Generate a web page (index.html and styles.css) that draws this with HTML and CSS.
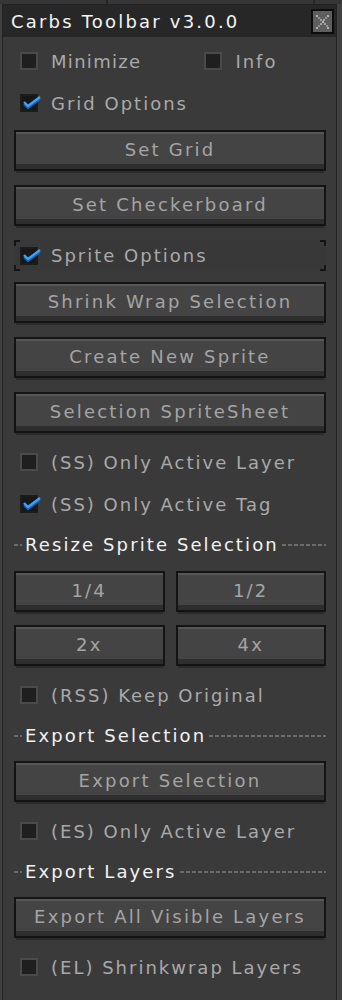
FILE: index.html
```html
<!DOCTYPE html>
<html>
<head>
	<title>Carbs Toolbar</title>
	<link rel="stylesheet" href="styles.css">
</head>
<body>
	<div class="topstrip">
		<div class="seg seg-a"></div>
		<div class="seg seg-b"></div>
		<div class="seg seg-c"></div>
	</div>
	<div class="window">
		<div class="titlebar">
			<span class="title">Carbs Toolbar v3.0.0</span>
			<button type="button" class="close">
				<svg width="17" height="19" viewBox="0 0 17 19">
					<rect x="2" y="3" width="2" height="2" fill="#b0b0b0"/>
					<rect x="4" y="5" width="2" height="2" fill="#8e8e8e"/>
					<rect x="6" y="7" width="2" height="2" fill="#a0a0a0"/>
					<rect x="8" y="9" width="2" height="2" fill="#b8b8b8"/>
					<rect x="10" y="11" width="2" height="2" fill="#a0a0a0"/>
					<rect x="12" y="13" width="2" height="2" fill="#8e8e8e"/>
					<rect x="13" y="15" width="2" height="2" fill="#b0b0b0"/>
					<rect x="13" y="3" width="2" height="2" fill="#b0b0b0"/>
					<rect x="11" y="5" width="2" height="2" fill="#8e8e8e"/>
					<rect x="9" y="7" width="2" height="2" fill="#a0a0a0"/>
					<rect x="6" y="11" width="2" height="2" fill="#a0a0a0"/>
					<rect x="4" y="13" width="2" height="2" fill="#8e8e8e"/>
					<rect x="2" y="15" width="2" height="2" fill="#b0b0b0"/>
				</svg>
			</button>
		</div>
		<div class="content">
			<div class="row row-first">
				<label class="check check-min"><span class="box"></span>Minimize</label>
				<label class="check check-info"><span class="box"></span>Info</label>
			</div>
			<div class="row">
				<label class="check"><span class="box checked"><svg width="22" height="18" viewBox="0 0 22 18"><polyline points="3,10 7,14 19,5" fill="none" stroke="#1f5f9e" stroke-width="2.4"/><polyline points="3,8 7,12 19,3" fill="none" stroke="#3aa2ff" stroke-width="2.4"/></svg></span>Grid Options</label>
			</div>
			<button type="button" class="btn btn-first">Set Grid</button>
			<button type="button" class="btn">Set Checkerboard</button>
			<div class="row focused">
				<label class="check"><span class="box checked"><svg width="22" height="18" viewBox="0 0 22 18"><polyline points="3,10 7,14 19,5" fill="none" stroke="#1f5f9e" stroke-width="2.4"/><polyline points="3,8 7,12 19,3" fill="none" stroke="#3aa2ff" stroke-width="2.4"/></svg></span>Sprite Options</label>
			</div>
			<button type="button" class="btn btn-after-focus">Shrink Wrap Selection</button>
			<button type="button" class="btn">Create New Sprite</button>
			<button type="button" class="btn">Selection SpriteSheet</button>
			<div class="row row-after-btn">
				<label class="check"><span class="box"></span>(SS) Only Active Layer</label>
			</div>
			<div class="row">
				<label class="check"><span class="box checked"><svg width="22" height="18" viewBox="0 0 22 18"><polyline points="3,10 7,14 19,5" fill="none" stroke="#1f5f9e" stroke-width="2.4"/><polyline points="3,8 7,12 19,3" fill="none" stroke="#3aa2ff" stroke-width="2.4"/></svg></span>(SS) Only Active Tag</label>
			</div>
			<div class="heading"><span>Resize Sprite Selection</span></div>
			<div class="pair pair-first">
				<button type="button" class="btn">1/4</button>
				<button type="button" class="btn">1/2</button>
			</div>
			<div class="pair">
				<button type="button" class="btn">2x</button>
				<button type="button" class="btn">4x</button>
			</div>
			<div class="row row-after-btn">
				<label class="check"><span class="box"></span>(RSS) Keep Original</label>
			</div>
			<div class="heading"><span>Export Selection</span></div>
			<button type="button" class="btn btn-after-heading">Export Selection</button>
			<div class="row row-after-btn">
				<label class="check"><span class="box"></span>(ES) Only Active Layer</label>
			</div>
			<div class="heading"><span>Export Layers</span></div>
			<button type="button" class="btn btn-after-heading">Export All Visible Layers</button>
			<div class="row row-after-btn">
				<label class="check"><span class="box"></span>(EL) Shrinkwrap Layers</label>
			</div>
		</div>
	</div>
</body>
</html>
```

FILE: styles.css
```css
body {
	margin: 0;
	background-color: #404040;
	font-family: "DejaVu Sans", sans-serif;
	font-size: 18px;
	letter-spacing: 2px;
	overflow: hidden;
}
.topstrip {
	display: flex;
	height: 4px;
	background-color: #363636;
}
.seg {
	height: 4px;
	border-right: 2px solid #262626;
}
.seg-a {
	width: 106px;
}
.seg-b {
	width: 205px;
}
.seg-c {
	flex: 1;
	border-right: none;
}
.window {
	margin-left: 2px;
	width: 333px;
	border: 1px solid #232323;
	border-bottom: none;
	background-color: #3a3a3a;
	height: 1000px;
}
.titlebar {
	display: flex;
	align-items: center;
	justify-content: space-between;
	height: 32px;
	padding: 0 2px 0 8px;
	background-color: #272727;
}
.title {
	color: #f4f4f4;
	letter-spacing: 2.2px;
	white-space: nowrap;
}
.close {
	width: 23px;
	height: 25px;
	padding: 0;
	margin: 0;
	border: 2px solid #0d0d0d;
	background-color: #5e5e5e;
	display: flex;
	align-items: center;
	justify-content: center;
	flex-shrink: 0;
}
.content {
	padding: 0 10px 0 11px;
	display: flex;
	flex-direction: column;
}
.row {
	display: flex;
	align-items: center;
	height: 30px;
	margin-top: 12px;
	padding-left: 6px;
	box-sizing: border-box;
}
.row-first {
	margin-top: 9px;
}
.row-after-btn {
	margin-top: 14px;
}
.check {
	display: flex;
	align-items: center;
	color: #a9a9a9;
	white-space: nowrap;
}
.check-min {
	letter-spacing: 1.3px;
}
.check-info {
	margin-left: 63px;
}
.box {
	width: 18px;
	height: 18px;
	box-sizing: border-box;
	border: 2px solid #4a4a4a;
	background-color: #1f1f1f;
	margin-right: 13px;
	position: relative;
}
.box.checked {
	border-color: #1c1c1c;
	background-color: #171717;
}
.box svg {
	position: absolute;
	left: -1px;
	top: -2px;
	overflow: visible;
}
.focused {
	margin-top: 14px;
	height: 31px;
	background:
		linear-gradient(#141414, #141414) left top / 6px 2px no-repeat,
		linear-gradient(#141414, #141414) left top / 2px 6px no-repeat,
		linear-gradient(#141414, #141414) right top / 6px 2px no-repeat,
		linear-gradient(#141414, #141414) right top / 2px 6px no-repeat,
		linear-gradient(#141414, #141414) left bottom / 6px 2px no-repeat,
		linear-gradient(#141414, #141414) left bottom / 2px 6px no-repeat,
		linear-gradient(#141414, #141414) right bottom / 6px 2px no-repeat,
		linear-gradient(#141414, #141414) right bottom / 2px 6px no-repeat,
		#383838;
}
.btn {
	display: block;
	width: 100%;
	height: 41px;
	margin: 14px 0 0 0;
	padding: 0 0 3px 0;
	border: 2px solid #141414;
	background-color: #444444;
	box-shadow: inset 0 2px 0 #565656, inset 0 -5px 0 #2e2e2e, 0 4px 0 -2px #2a2a2a;
	color: #a4a4a4;
	font-family: inherit;
	font-size: 18px;
	letter-spacing: 2.2px;
	text-align: center;
	white-space: nowrap;
}
.btn-first {
	margin-top: 12px;
}
.btn-after-focus {
	margin-top: 11px;
}
.btn-after-heading {
	margin-top: 16px;
}
.heading {
	display: flex;
	align-items: center;
	height: 20px;
	margin-top: 15px;
	color: #f2f2f2;
	letter-spacing: 2.1px;
	white-space: nowrap;
	gap: 3px;
}
.heading::before,
.heading::after {
	content: "";
	height: 2px;
	margin-top: 2px;
	background: repeating-linear-gradient(to right, #6c6c6c 0 4px, transparent 4px 6px);
}
.heading::before {
	width: 8px;
}
.heading::after {
	flex: 1;
}
.pair {
	display: grid;
	grid-template-columns: 1fr 1fr;
	gap: 11px;
	margin-top: 13px;
}
.pair .btn {
	margin-top: 0;
}
.pair-first {
	margin-top: 17px;
}
```
